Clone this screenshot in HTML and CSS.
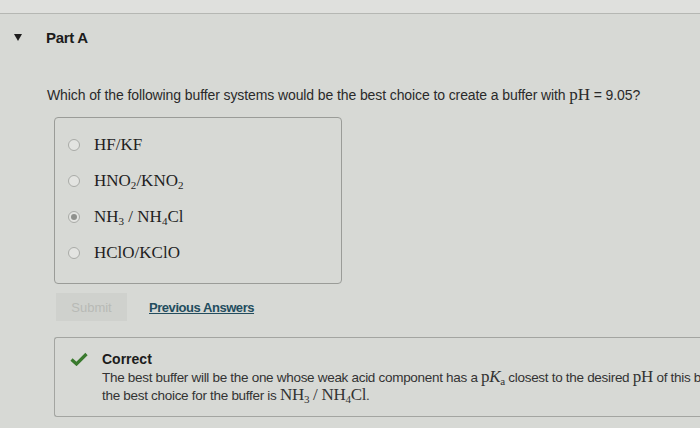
FILE: index.html
```html
<!DOCTYPE html>
<html>
<head>
<meta charset="utf-8">
<link rel="stylesheet" href="styles.css">
</head>
<body>
<div class="page">
  <div class="topstrip"></div>
  <div class="part-header">
    <span class="caret"></span>
    <span class="part-title">Part A</span>
  </div>
  <p class="question">Which of the following buffer systems would be the best choice to create a buffer with <span class="m m-lg">pH</span> = 9.05?</p>
  <div class="options">
    <label class="opt"><span class="radio"></span><span class="m">HF/KF</span></label>
    <label class="opt"><span class="radio"></span><span class="m">HNO<sub>2</sub>/KNO<sub>2</sub></span></label>
    <label class="opt"><span class="radio checked"></span><span class="m">NH<sub>3</sub> / NH<sub>4</sub>Cl</span></label>
    <label class="opt"><span class="radio"></span><span class="m">HClO/KClO</span></label>
  </div>
  <div class="actions">
    <span class="submit">Submit</span>
    <a class="prev">Previous Answers</a>
  </div>
  <div class="feedback">
    <svg class="check" viewBox="0 0 18 14" width="18" height="14"><path d="M1.5 7.5 L6.5 12 L16.5 2" fill="none" stroke="#3a7a2e" stroke-width="3.2" stroke-linejoin="miter"/></svg>
    <div class="fb-body">
      <div class="fb-title">Correct</div>
      <div class="fb-text">The best buffer will be the one whose weak acid component has a <span class="m m-md">p<i>K</i><sub>a</sub></span> closest to the desired <span class="m m-md">pH</span> of this buffer. Therefore,<br>the best choice for the buffer is <span class="m m-md">NH<sub>3</sub> / NH<sub>4</sub>Cl</span>.</div>
    </div>
  </div>
</div>
</body>
</html>
```
FILE: styles.css
```css
html, body {
  margin: 0;
  padding: 0;
}
body {
  width: 700px;
  height: 428px;
  overflow: hidden;
  background: #d7d9d5;
  font-family: "Liberation Sans", Arial, sans-serif;
  color: #222;
}
.page {
  display: flex;
  flex-direction: column;
}
.topstrip {
  height: 13px;
  background: #dfe0dd;
  border-bottom: 1px solid #b5b7b3;
}
.part-header {
  display: flex;
  align-items: center;
  height: 46px;
  padding-left: 14px;
}
.caret {
  width: 0;
  height: 0;
  border-left: 4.5px solid transparent;
  border-right: 4.5px solid transparent;
  border-top: 7px solid #1e1e1e;
  margin-right: 24px;
}
.part-title {
  font-size: 15px;
  font-weight: bold;
  color: #1c1c1c;
  letter-spacing: -0.3px;
}
.question {
  margin: 26px 0 0 47px;
  font-size: 14px;
  color: #2a2a2a;
  line-height: 18px;
  letter-spacing: -0.1px;
}
.m {
  font-family: "Liberation Serif", "Times New Roman", serif;
}
.m-lg {
  font-size: 17px;
}
.m-md {
  font-size: 17px;
}
sub {
  font-size: 0.65em;
  vertical-align: -0.25em;
  line-height: 0;
}
.options {
  margin: 13px 0 0 54px;
  width: 288px;
  height: 167px;
  border: 1px solid #9a9c98;
  border-radius: 4px;
  display: flex;
  flex-direction: column;
  padding-top: 17px;
  box-sizing: border-box;
  gap: 16px;
}
.opt {
  display: flex;
  align-items: center;
  height: 20px;
  padding-left: 13px;
  font-size: 17px;
  color: #1f1f1f;
}
.radio {
  width: 10px;
  height: 10px;
  border: 1px solid #a9aba7;
  border-radius: 50%;
  background: #e3e4e1;
  margin-right: 14px;
  display: flex;
  align-items: center;
  justify-content: center;
}
.radio.checked::after {
  content: "";
  width: 6px;
  height: 6px;
  border-radius: 50%;
  background: #8f918d;
}
.actions {
  display: flex;
  align-items: center;
  margin: 9px 0 0 56px;
  gap: 22px;
}
.submit {
  width: 71px;
  height: 28px;
  background: #cfd1cd;
  color: #b8bab6;
  font-size: 13px;
  display: flex;
  align-items: center;
  justify-content: center;
}
.prev {
  font-size: 13px;
  font-weight: bold;
  color: #234d5e;
  text-decoration: underline;
  letter-spacing: -0.45px;
}
.feedback {
  margin: 16px 0 0 54px;
  width: 646px;
  height: 80px;
  border: 1px solid #a3a5a1;
  border-right: none;
  border-radius: 3px 0 0 3px;
  box-sizing: border-box;
  display: flex;
  padding: 13px 0 0 15px;
  gap: 14px;
  overflow: hidden;
}
.check {
  margin-top: 1px;
  flex-shrink: 0;
}
.fb-title {
  font-size: 14px;
  font-weight: bold;
  color: #1c1c1c;
  line-height: 17px;
}
.fb-text {
  font-size: 13.5px;
  color: #333;
  line-height: 17px;
  white-space: nowrap;
  letter-spacing: -0.3px;
}
```
